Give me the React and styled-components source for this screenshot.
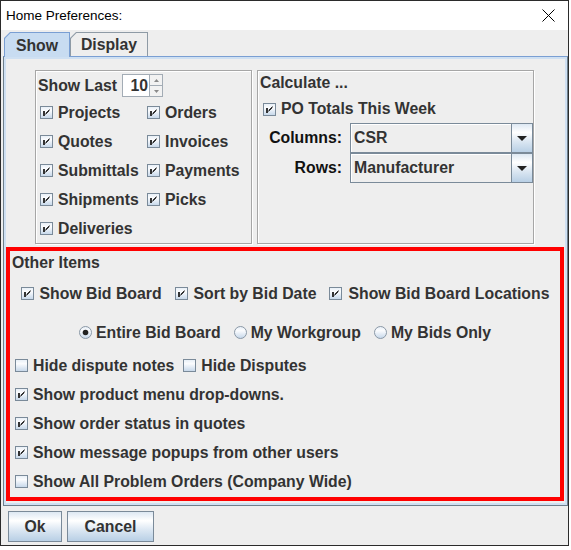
import { styled, createGlobalStyle } from 'styled-components';

const GlobalStyle = createGlobalStyle`
  html, body {
    margin: 0;
    padding: 0;
    background: #ffffff;
  }
  * {
    box-sizing: border-box;
  }
`;

const TEXT = '#333333';
const FONT = `"Liberation Sans", Arial, sans-serif`;
const SIZE = '15.8px';

const CheckIcon = ({ checked }) => (
  <svg width="13" height="13" viewBox="0 0 13 13" style={{ flex: 'none' }}>
    <defs>
      <linearGradient id="ocean" x1="0" y1="0" x2="0" y2="1">
        <stop offset="0" stopColor="#e6eef6" />
        <stop offset="0.35" stopColor="#fbfcfe" />
        <stop offset="1" stopColor="#c4d6e9" />
      </linearGradient>
    </defs>
    <rect x="0.5" y="0.5" width="12" height="12" fill="url(#ocean)" stroke="#7a8a99" />
    {checked && (
      <g fill={TEXT}>
        <rect x="3" y="5" width="2" height="5" />
        <path d="M9.5 3.5 L5.5 7.5 M9.5 4.5 L5.5 8.5" stroke={TEXT} strokeWidth="1" fill="none" />
      </g>
    )}
  </svg>
);

const RadioIcon = ({ checked }) => (
  <svg width="13" height="13" viewBox="0 0 13 13" style={{ flex: 'none' }}>
    <defs>
      <linearGradient id="oceanRadio" x1="0" y1="0" x2="0" y2="1">
        <stop offset="0" stopColor="#e6eef6" />
        <stop offset="0.35" stopColor="#fbfcfe" />
        <stop offset="1" stopColor="#c4d6e9" />
      </linearGradient>
    </defs>
    <circle cx="6.5" cy="6.5" r="6" fill="url(#oceanRadio)" stroke="#8a98a6" />
    {checked && <circle cx="6.5" cy="6.5" r="2.8" fill="#222" />}
  </svg>
);

const Check = ({ checked, gap, children }) => (
  <CheckItem $gap={gap}>
    <CheckIcon checked={checked} />
    <span>{children}</span>
  </CheckItem>
);

const Radio = ({ checked, children }) => (
  <CheckItem $gap={4}>
    <RadioIcon checked={checked} />
    <span>{children}</span>
  </CheckItem>
);

const Combo = ({ value }) => (
  <ComboBox>
    <ComboValue>{value}</ComboValue>
    <ComboArrow>
      <svg width="10" height="5" viewBox="0 0 10 5">
        <polygon points="0,0 10,0 5,5" fill="#222" />
      </svg>
    </ComboArrow>
  </ComboBox>
);

const App = () => {
  return (
    <>
      <GlobalStyle />
      <Window>
        <TitleBar>
          <TitleText>Home Preferences:</TitleText>
          <svg width="13" height="13" viewBox="0 0 13 13">
            <path d="M0.5 0.5 L12.5 12.5 M12.5 0.5 L0.5 12.5" stroke="#000" strokeWidth="1" />
          </svg>
        </TitleBar>

        <Body>
          <TabStrip>
            <Tab $selected $width={66}>
              <TabInner $selected>Show</TabInner>
            </Tab>
            <Tab $width={78}>
              <TabInner>Display</TabInner>
            </Tab>
          </TabStrip>

          <Panel>
            <TopArea>
              <Group $width={217}>
                <ShowLastRow>
                  <span>Show Last</span>
                  <Spinner>
                    <SpinnerField>10</SpinnerField>
                    <SpinnerButtons>
                      <SpinnerButton>
                        <svg width="5" height="3" viewBox="0 0 5 3">
                          <polygon points="2.5,0 5,3 0,3" fill="#8a8a8a" />
                        </svg>
                      </SpinnerButton>
                      <SpinnerButton>
                        <svg width="5" height="3" viewBox="0 0 5 3">
                          <polygon points="0,0 5,0 2.5,3" fill="#8a8a8a" />
                        </svg>
                      </SpinnerButton>
                    </SpinnerButtons>
                  </Spinner>
                </ShowLastRow>
                <ShowGrid>
                  <Check checked>Projects</Check>
                  <Check checked>Orders</Check>
                  <Check checked>Quotes</Check>
                  <Check checked>Invoices</Check>
                  <Check checked>Submittals</Check>
                  <Check checked>Payments</Check>
                  <Check checked>Shipments</Check>
                  <Check checked>Picks</Check>
                  <Check checked>Deliveries</Check>
                </ShowGrid>
              </Group>

              <Group $width={277}>
                <GroupTitle>Calculate ...</GroupTitle>
                <PoRow>
                  <Check checked>PO Totals This Week</Check>
                </PoRow>
                <ComboGrid>
                  <ComboLabel>Columns:</ComboLabel>
                  <Combo value="CSR" />
                  <ComboLabel>Rows:</ComboLabel>
                  <Combo value="Manufacturer" />
                </ComboGrid>
              </Group>
            </TopArea>

            <OtherItems>
              <GroupTitle>Other Items</GroupTitle>
              <CenterRow $gap={13} $top={4}>
                <Check checked gap={6}>Show Bid Board</Check>
                <Check checked gap={6}>Sort by Bid Date</Check>
                <Check checked gap={6}>Show Bid Board Locations</Check>
              </CenterRow>
              <CenterRow $gap={13} $top={10}>
                <Radio checked>Entire Bid Board</Radio>
                <Radio>My Workgroup</Radio>
                <Radio>My Bids Only</Radio>
              </CenterRow>
              <LeftRow $gap={9} $top={4}>
                <Check>Hide dispute notes</Check>
                <Check>Hide Disputes</Check>
              </LeftRow>
              <LeftRow>
                <Check checked>Show product menu drop-downs.</Check>
              </LeftRow>
              <LeftRow>
                <Check checked>Show order status in quotes</Check>
              </LeftRow>
              <LeftRow>
                <Check checked>Show message popups from other users</Check>
              </LeftRow>
              <LeftRow>
                <Check>Show All Problem Orders (Company Wide)</Check>
              </LeftRow>
            </OtherItems>
          </Panel>

          <ButtonBar>
            <Button $width={54}>Ok</Button>
            <Button $width={87}>Cancel</Button>
          </ButtonBar>
        </Body>
      </Window>
    </>
  );
};

export default App;

const Window = styled.div`
  width: 569px;
  height: 546px;
  border: 1px solid #2b2b2b;
  display: flex;
  flex-direction: column;
  font-family: ${FONT};
  color: ${TEXT};
`;

const TitleBar = styled.div`
  height: 29px;
  flex: none;
  background: #ffffff;
  display: flex;
  align-items: center;
  justify-content: space-between;
  padding: 0 13px 1px 5px;
`;

const TitleText = styled.span`
  font-size: 13.5px;
  color: #000000;
`;

const Body = styled.div`
  flex: 1;
  background: #eeeeee;
  display: flex;
  flex-direction: column;
`;

const TabStrip = styled.div`
  height: 26px;
  padding: 2px 0 0 3px;
  display: flex;
  align-items: flex-start;
`;

const Tab = styled.div`
  width: ${(p) => p.$width}px;
  height: ${(p) => (p.$selected ? 25 : 24)}px;
  padding: 1px 1px 0 1px;
  background: ${(p) => (p.$selected ? '#7a9fd3' : '#8e9aa5')};
  clip-path: polygon(0 6px, 6px 0, 100% 0, 100% 100%, 0 100%);
  position: relative;
  z-index: ${(p) => (p.$selected ? 2 : 1)};
`;

const TabInner = styled.div`
  height: 100%;
  background: ${(p) => (p.$selected ? '#c8dcf1' : '#eeeeee')};
  clip-path: polygon(0 5.5px, 5.5px 0, 100% 0, 100% 100%, 0 100%);
  display: flex;
  align-items: center;
  justify-content: center;
  font-size: ${SIZE};
  font-weight: bold;
  padding-top: 1px;
`;

const Panel = styled.div`
  margin-left: 2px;
  width: 565px;
  height: 450px;
  border: 1px solid #6e7f8c;
  border-top-color: #7a9fd3;
  box-shadow: inset 0 0 0 2px #cfe0f2;
  padding: 2px;
  display: flex;
  flex-direction: column;
`;

const TopArea = styled.div`
  display: flex;
  gap: 5px;
  padding: 11px 0 0 29px;
`;

const Group = styled.div`
  width: ${(p) => p.$width}px;
  height: 174px;
  border: 1px solid #a6a6a6;
  box-shadow: inset 1px 1px 0 #ffffff, 1px 1px 0 #ffffff;
  display: flex;
  flex-direction: column;
`;

const ShowLastRow = styled.div`
  margin-top: 3px;
  height: 23px;
  padding-left: 2px;
  display: flex;
  align-items: center;
  gap: 5px;
  font-size: ${SIZE};
  font-weight: bold;
`;

const Spinner = styled.div`
  width: 41px;
  height: 23px;
  display: flex;
  border: 1px solid #a3acb5;
`;

const SpinnerField = styled.div`
  flex: 1;
  background: #ffffff;
  display: flex;
  align-items: center;
  justify-content: flex-end;
  padding-right: 1px;
  font-size: ${SIZE};
  font-weight: bold;
`;

const SpinnerButtons = styled.div`
  width: 13px;
  display: flex;
  flex-direction: column;
  border-left: 1px solid #a3acb5;
`;

const SpinnerButton = styled.div`
  flex: 1;
  display: flex;
  align-items: center;
  justify-content: center;
  background: #f2f2f2;
  & + & {
    border-top: 1px solid #a3acb5;
  }
`;

const ShowGrid = styled.div`
  margin-top: 1px;
  padding-left: 4px;
  display: grid;
  grid-template-columns: 107px auto;
  grid-auto-rows: 29px;
`;

const CheckItem = styled.label`
  display: flex;
  align-items: center;
  gap: ${(p) => p.$gap || 5}px;
  font-size: ${SIZE};
  font-weight: bold;
  white-space: nowrap;
`;

const GroupTitle = styled.div`
  height: 24px;
  padding-left: 2px;
  display: flex;
  align-items: center;
  font-size: ${SIZE};
  font-weight: bold;
`;

const PoRow = styled.div`
  height: 28px;
  padding-left: 5px;
  display: flex;
  align-items: center;
`;

const ComboGrid = styled.div`
  display: grid;
  grid-template-columns: 86px 1fr;
  grid-auto-rows: 30px;
  column-gap: 6px;
`;

const ComboLabel = styled.div`
  display: flex;
  align-items: center;
  justify-content: flex-end;
  padding-right: 2px;
  font-size: ${SIZE};
  font-weight: bold;
  color: #111111;
`;

const ComboBox = styled.div`
  display: flex;
  border: 1px solid #7a8a99;
  background: #eeeeee;
  box-shadow: inset 1px 1px 0 #ffffff;
`;

const ComboValue = styled.div`
  flex: 1;
  display: flex;
  align-items: center;
  padding-left: 3px;
  font-size: ${SIZE};
  font-weight: bold;
  border-right: 1px solid #7a8a99;
`;

const ComboArrow = styled.div`
  width: 20px;
  display: flex;
  align-items: center;
  justify-content: center;
  background: linear-gradient(#dde8f3 0%, #ffffff 30%, #dde8f3 60%, #b8cfe5 100%);
`;

const OtherItems = styled.div`
  margin-top: 3px;
  width: 558px;
  height: 254px;
  border: 4px solid #ff0000;
  display: flex;
  flex-direction: column;
`;

const CenterRow = styled.div`
  height: 29px;
  margin-top: ${(p) => p.$top || 0}px;
  display: flex;
  align-items: center;
  justify-content: center;
  gap: ${(p) => p.$gap || 0}px;
`;

const LeftRow = styled.div`
  height: 29px;
  margin-top: ${(p) => p.$top || 0}px;
  padding-left: 5px;
  display: flex;
  align-items: center;
  gap: ${(p) => p.$gap || 0}px;
`;

const ButtonBar = styled.div`
  padding: 5px 0 0 7px;
  display: flex;
  gap: 5px;
`;

const Button = styled.button`
  width: ${(p) => p.$width}px;
  height: 31px;
  padding: 0;
  border: 1px solid #7a8a99;
  background: linear-gradient(#dde8f3 0%, #ffffff 30%, #dde8f3 60%, #b8cfe5 100%);
  font-family: ${FONT};
  font-size: ${SIZE};
  font-weight: bold;
  color: ${TEXT};
`;
